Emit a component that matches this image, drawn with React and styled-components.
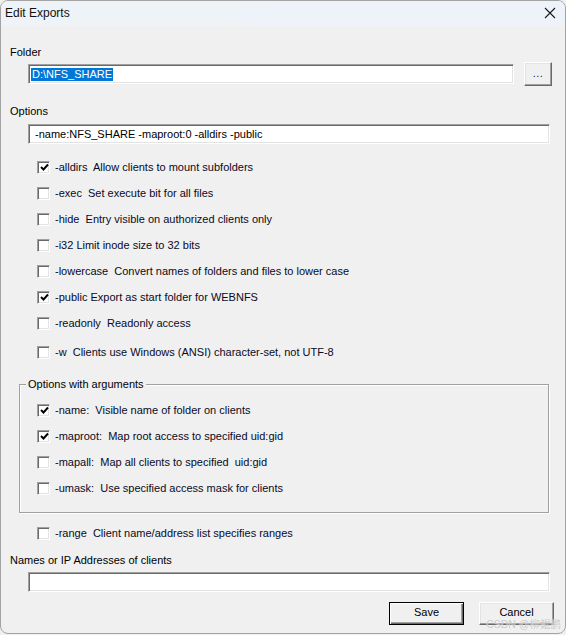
import React from 'react';
import styled, { createGlobalStyle } from 'styled-components';

const GlobalStyle = createGlobalStyle`
  html, body {
    margin: 0;
    padding: 0;
    background: #f0f0f0;
  }
  * {
    box-sizing: border-box;
  }
`;

const simpleOptions = [
  { flag: '-alldirs', text: 'Allow clients to mount subfolders', checked: true },
  { flag: '-exec', text: 'Set execute bit for all files' },
  { flag: '-hide', text: 'Entry visible on authorized clients only' },
  { flag: '-i32', text: 'Limit inode size to 32 bits', gap: ' ' },
  { flag: '-lowercase', text: 'Convert names of folders and files to lower case' },
  { flag: '-public', text: 'Export as start folder for WEBNFS', checked: true, gap: ' ' },
  { flag: '-readonly', text: 'Readonly access' },
];

const argOptions = [
  { flag: '-name:', text: 'Visible name of folder on clients', checked: true },
  { flag: '-maproot:', text: 'Map root access to specified uid:gid', checked: true },
  { flag: '-mapall:', text: 'Map all clients to specified  uid:gid' },
  { flag: '-umask:', text: 'Use specified access mask for clients' },
];

const CheckRow = ({ checked, flag, text, gap = '  ', tall }) => (
  <Row $tall={tall}>
    <Box>
      {checked && (
        <svg width="9" height="9" viewBox="0 0 9 9">
          <path d="M1 4 L3.5 6.5 L8 1.5" fill="none" stroke="#000" strokeWidth="1.9" />
        </svg>
      )}
    </Box>
    <RowLabel>{flag + gap + text}</RowLabel>
  </Row>
);

const App = () => {
  return (
    <>
      <GlobalStyle />
      <Window>
        <TitleBar>
          <Title>Edit Exports</Title>
          <CloseButton>
            <svg width="12" height="12" viewBox="0 0 12 12">
              <path d="M1 1 L11 11 M11 1 L1 11" stroke="#1a1a1a" strokeWidth="1.1" />
            </svg>
          </CloseButton>
        </TitleBar>
        <Body>
          <Label $top={20}>Folder</Label>
          <FolderRow>
            <Field $width={486}>
              <Selected>D:\NFS_SHARE</Selected>
            </Field>
            <SmallButton>...</SmallButton>
          </FolderRow>

          <Label $top={19}>Options</Label>
          <Field $width={522} $top={6}>
            <FieldText>-name:NFS_SHARE -maproot:0 -alldirs -public</FieldText>
          </Field>

          <Checks>
            {simpleOptions.map((o) => (
              <CheckRow key={o.flag} {...o} />
            ))}
            <CheckRow flag="-w" text="Clients use Windows (ANSI) character-set, not UTF-8" tall />
          </Checks>

          <Group>
            <Legend>Options with arguments</Legend>
            {argOptions.map((o) => (
              <CheckRow key={o.flag} {...o} />
            ))}
          </Group>

          <RangeRow>
            <CheckRow flag="-range" text="Client name/address list specifies ranges" />
          </RangeRow>

          <Label $top={8}>Names or IP Addresses of clients</Label>
          <Field $width={522} $top={5} />

          <Footer>
            <PushButton $default>Save</PushButton>
            <PushButton>Cancel</PushButton>
          </Footer>
        </Body>
        <Watermark>CSDN @柳鲲鹏</Watermark>
      </Window>
    </>
  );
};

export default App;

const Window = styled.div`
  position: relative;
  width: 566px;
  height: 634px;
  border: 1px solid #a3a3a3;
  border-radius: 8px;
  overflow: hidden;
  background: #f0f0f0;
  font-family: 'Liberation Sans', Arial, sans-serif;
  font-size: 11px;
  color: #000;
`;

const TitleBar = styled.div`
  height: 25px;
  display: flex;
  align-items: center;
  justify-content: space-between;
  padding-left: 4px;
  background: linear-gradient(90deg, #eef3f7 0%, #edf3f9 100%);
`;

const Title = styled.span`
  font-size: 12px;
  color: #111;
  margin-top: -2px;
`;

const CloseButton = styled.div`
  width: 30px;
  height: 25px;
  display: flex;
  align-items: center;
  justify-content: center;
  margin-top: -2px;
`;

const Body = styled.div`
  padding: 0 0 0 9px;
`;

const Label = styled.div`
  margin-top: ${({ $top }) => $top}px;
  line-height: 13px;
  height: 13px;
  white-space: pre;
`;

const FolderRow = styled.div`
  display: flex;
  align-items: center;
  gap: 10px;
  margin-top: 3px;
  padding-left: 18px;
  height: 24px;
`;

const Field = styled.div`
  width: ${({ $width }) => $width}px;
  height: 20px;
  margin-top: ${({ $top = 0 }) => $top}px;
  margin-left: ${({ $top }) => ($top === undefined ? 0 : 18)}px;
  background: #fff;
  border: 1px solid;
  border-color: #a0a0a0 #fff #fff #a0a0a0;
  box-shadow: inset 1px 1px 0 #696969, inset -1px -1px 0 #e3e3e3;
  display: flex;
  align-items: center;
  padding-left: 2px;
`;

const FieldText = styled.span`
  padding-left: 4px;
  white-space: pre;
`;

const Selected = styled.span`
  background: #0078d7;
  color: #fff;
  line-height: 13px;
  padding: 0 1px;
  white-space: pre;
`;

const SmallButton = styled.div`
  width: 28px;
  height: 24px;
  display: flex;
  align-items: center;
  justify-content: center;
  padding-bottom: 2px;
  background: #f0f0f0;
  border: 1px solid;
  border-color: #fff #696969 #696969 #fff;
  box-shadow: inset -1px -1px 0 #a0a0a0, inset 1px 1px 0 #e3e3e3;
  color: #1d1d6b;
  letter-spacing: 0.5px;
`;

const Checks = styled.div`
  margin-top: 10px;
  display: flex;
  flex-direction: column;
`;

const Row = styled.div`
  display: flex;
  align-items: center;
  gap: 5px;
  height: 26px;
  padding-left: 27px;
  margin-top: ${({ $tall }) => ($tall ? 3 : 0)}px;
`;

const Box = styled.div`
  width: 13px;
  height: 13px;
  flex: none;
  background: #fff;
  border: 1px solid;
  border-color: #a0a0a0 #fff #fff #a0a0a0;
  box-shadow: inset 1px 1px 0 #696969, inset -1px -1px 0 #e3e3e3;
  display: flex;
  align-items: center;
  justify-content: center;
  padding: 1px 0 0 1px;
`;

const RowLabel = styled.span`
  white-space: pre;
  line-height: 13px;
  color: #0a0a1e;
`;

const Group = styled.div`
  position: relative;
  width: 530px;
  height: 129px;
  margin: 19px 0 0 9px;
  padding-top: 12px;
  border: 1px solid #a0a0a0;
  box-shadow: 1px 1px 0 #fff, inset 1px 1px 0 #fff;
  display: flex;
  flex-direction: column;
  & > div {
    padding-left: 17px;
  }
`;

const Legend = styled.span`
  position: absolute;
  top: -7px;
  left: 6px;
  padding: 0 2px;
  line-height: 13px;
  background: #f0f0f0;
`;

const RangeRow = styled.div`
  margin-top: 7px;
`;

const Footer = styled.div`
  display: flex;
  justify-content: flex-end;
  gap: 15px;
  margin-top: 10px;
  padding-right: 11px;
`;

const PushButton = styled.div`
  width: 75px;
  height: 23px;
  display: flex;
  align-items: center;
  justify-content: center;
  padding-bottom: 3px;
  font-size: 11px;
  background: #f0f0f0;
  border: 1px solid;
  border-color: ${({ $default }) => ($default ? '#000' : '#fff #696969 #696969 #fff')};
  box-shadow: ${({ $default }) =>
    $default
      ? 'inset 1px 1px 0 #fff, inset -1px -1px 0 #696969, inset -2px -2px 0 #a0a0a0'
      : 'inset -1px -1px 0 #a0a0a0, inset 1px 1px 0 #e3e3e3'};
`;

const Watermark = styled.span`
  position: absolute;
  right: 4px;
  bottom: 4px;
  line-height: 10px;
  font-family: 'Liberation Sans', 'Noto Sans CJK SC', sans-serif;
  font-size: 10.5px;
  color: rgba(175, 175, 175, 0.7);
  text-shadow: 0 0 1px #fff;
`;
